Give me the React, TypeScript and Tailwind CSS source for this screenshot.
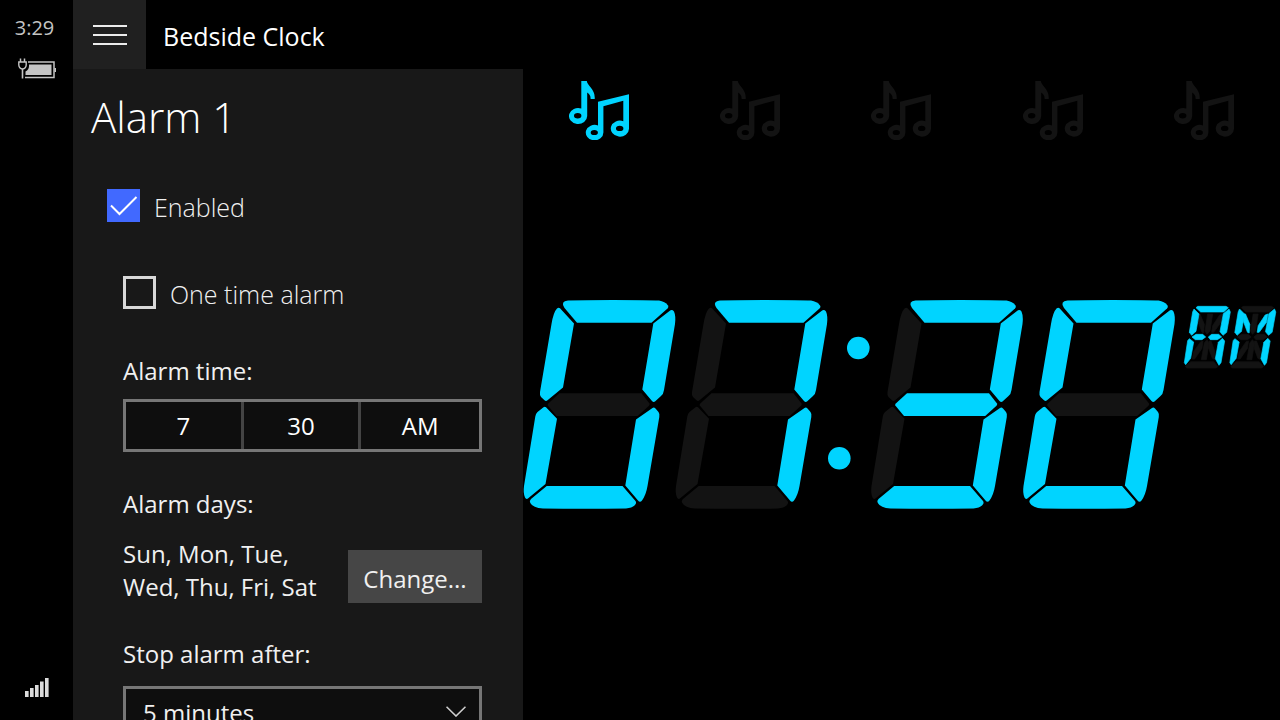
import { useState } from 'react';

type SegmentName = 'a' | 'b' | 'c' | 'd' | 'e' | 'f' | 'g';

const LIT = '#00d4ff';
const DIM = '#131313';

const segmentPaths: Record<SegmentName, string> = {
    a: 'M54 22.7 L41.5 8 Q37 1.5 45 .6 Q60 0 90 0 Q125 0 136 .6 Q142 1.5 145 5.5 Q146 7 144.5 8.5 L128.5 22.7 Z',
    b: 'M130.3 23.5 L146.5 11 Q149 9 151 11.5 Q153 16 152 24 L141 90 Q140.5 94 138 96 L132 101.5 Q130.5 102.5 129 101 L119.3 89.5 Z',
    c: 'M113 119.5 L129.5 108 Q131 107 132.5 108.5 L135.5 112 Q137 114 136.3 117 L124.5 186 Q123 195 119 200.5 Q117 203 115 200.5 L102.3 185.5 Z',
    d: 'M23.7 186 L99.5 186 L112.5 201 Q114 203 111.5 205.5 Q109 208 103 208.4 Q60 209.3 20 208.4 Q10 208 7.3 203 Q6 201 8 199 Z',
    e: 'M34 118.7 L23 107.3 Q21.8 106.2 20.5 107.3 L14.5 112 Q12.7 113.5 12.3 116.5 L1 186 Q0 193 2 197.5 Q3.2 200 5.5 198 L22.5 184 Z',
    f: 'M51 23.5 L37 8.3 Q35.8 7 34 8.5 Q30.5 12 28.5 24 L17 92 Q16.5 95 18 97 L21.5 100.3 Q23 101.6 24.5 100.3 L40 87.5 Z',
    g: 'M24.8 105.5 Q24.3 104.5 25.3 103.5 L36.5 93.3 L118.5 93.3 L126.3 103.2 Q127.2 104.5 126 105.7 L114.7 116 L33.5 116 Z',
};

const digitSegments: Record<string, string> = {
    '0': 'abcdef',
    '3': 'abcdg',
    '7': 'abc',
};

const letterPaths: Record<string, string> = {
    top: 'M78 38 L83 34 L168 34 L175 38 L161 51 L92 51 Z',
    bottom: 'M62 200 L131 200 L144 215 L138 219 L50 219 L46 214 Z',
    postUpper: 'M113 57 L128 57 L120 108 L111 118 L105 108 Z',
    postLower: 'M111 134 L117 144 L109 194 L94 194 L103 144 Z',
    diagLowerLeft: 'M99 138 L96 160 L74 192 L67 192 L71 170 L92 140 Z',
    diagLowerRight: 'M117 138 L123 138 L135 170 L133 193 L127 190 L116 160 Z',
    diagUpperLeft: 'M84 57 L90 57 L103 88 L101 114 L96 112 L84 80 Z',
    diagUpperRight: 'M157 57 L153 82 L131 112 L125 112 L128 92 L149 60 Z',
    upperLeft: 'M72 42 L87 57 L78 109 L65 121 L58 112 L68 51 Z',
    upperRight: 'M177 42 L181 51 L170 112 L159 121 L150 110 L160 56 Z',
    midLeft: 'M66 126 L78 118 L98 118 L107 126 L96 134 L76 134 Z',
    midRight: 'M115 126 L125 118 L146 118 L155 126 L142 134 L121 134 Z',
    lowerLeft: 'M58 131 L71 141 L62 190 L47 209 L43 203 L53 137 Z',
    lowerRight: 'M157 130 L164 138 L153 203 L147 211 L136 191 L145 142 Z',
};

const letterSegments: Record<string, string[]> = {
    A: ['top', 'upperLeft', 'upperRight', 'midLeft', 'midRight', 'lowerLeft', 'lowerRight'],
    M: ['upperLeft', 'upperRight', 'lowerLeft', 'lowerRight', 'diagUpperLeft', 'diagUpperRight'],
};

function Digit({ value, x }: { value: string; x: number }) {
    return (
        <g transform={`translate(${x} 0)`}>
            {(Object.keys(segmentPaths) as SegmentName[]).map((name) => (
                <path
                    key={name}
                    d={segmentPaths[name]}
                    fill={digitSegments[value].includes(name) ? LIT : DIM}
                />
            ))}
        </g>
    );
}

function Letter({ value, x }: { value: string; x: number }) {
    return (
        <g transform={`translate(${x} -5) scale(0.3333)`} strokeWidth="2" strokeLinejoin="round">
            {Object.keys(letterPaths).map((name) => {
                const color = letterSegments[value].includes(name) ? LIT : DIM;
                return <path key={name} d={letterPaths[name]} fill={color} stroke={color} />;
            })}
        </g>
    );
}

function ClockFace() {
    return (
        <svg viewBox="0 0 757 210" className="mt-40 w-full" role="img" aria-label="07:30 AM">
            <Digit value="0" x={0} />
            <Digit value="7" x={152} />
            <circle cx="335.3" cy="48" r="11.3" fill={LIT} />
            <circle cx="316.3" cy="158.3" r="11.3" fill={LIT} />
            <Digit value="3" x={347.5} />
            <Digit value="0" x={499.5} />
            <Letter value="A" x={647} />
            <Letter value="M" x={692.5} />
        </svg>
    );
}

function MusicNotes({ active }: { active: boolean }) {
    return (
        <svg viewBox="0 0 60 60" className="size-15" fill={active ? LIT : DIM} fillRule="evenodd">
            <path d="M12.3 1 H17.8 C18.3 6 26.5 9 25.7 19 H21.6 C21.8 15.5 20 13.5 18.2 12.5 V36 A9.1 8 0 1 1 12.3 28.5 Z M5 35.7 A3.7 2.7 0 1 0 12.4 35.7 A3.7 2.7 0 1 0 5 35.7 Z" />
            <path d="M29 21.7 L60 14.3 V48.7 A9.1 8 0 1 1 54.3 41.2 V20.7 L34.4 26.2 V52.5 A8.8 7.7 0 1 1 29 45.5 Z M21.7 52.5 A3.6 2.6 0 1 0 28.9 52.5 A3.6 2.6 0 1 0 21.7 52.5 Z M47 48.4 A3.7 2.7 0 1 0 54.4 48.4 A3.7 2.7 0 1 0 47 48.4 Z" />
        </svg>
    );
}

function BatteryIcon() {
    return (
        <svg viewBox="0 0 38 21" className="mt-4 h-[21px] w-[38px]" fill="none" stroke="#c4c4c4">
            <path d="M2.5 0.5 V4 M6.5 0.5 V4" strokeWidth="1.5" />
            <path d="M0.8 4 H8.2 V7 Q8 10.5 4.5 11 Q1 10.5 0.8 7 Z" strokeWidth="1.4" />
            <path d="M4.5 11 V20.5" strokeWidth="1.6" />
            <path d="M10 4 H36 V19.5 H7" strokeWidth="1.5" />
            <path d="M11 6.5 H33.5 V17 H7.5 V13.5 Q11 11.5 11 8 Z" fill="#c4c4c4" stroke="none" />
            <path d="M37.2 10 V14" strokeWidth="1.6" />
        </svg>
    );
}

function SignalIcon() {
    return (
        <svg viewBox="0 0 24 19" className="h-[19px] w-6" fill="#dcdcdc">
            <rect x="0" y="13" width="3.6" height="6" />
            <rect x="5" y="10" width="3.6" height="9" />
            <rect x="10" y="7" width="3.6" height="12" />
            <rect x="15" y="3.5" width="3.6" height="15.5" />
            <rect x="20" y="0" width="3.6" height="19" />
        </svg>
    );
}

interface CheckboxRowProps {
    id: string;
    label: string;
    checked: boolean;
    onChange: (checked: boolean) => void;
}

function CheckboxRow({ id, label, checked, onChange }: CheckboxRowProps) {
    return (
        <div className="flex h-[33px] items-center gap-[14px]">
            <span className="relative size-[33px]">
                <input
                    id={id}
                    type="checkbox"
                    checked={checked}
                    onChange={(e) => onChange(e.target.checked)}
                    className="block size-[33px] appearance-none border-3 border-[#d8d8d8] checked:border-[#4169ff] checked:bg-[#4169ff]"
                />
                {checked && (
                    <svg
                        viewBox="0 0 33 33"
                        className="pointer-events-none absolute inset-0"
                        fill="none"
                        stroke="white"
                        strokeWidth="2"
                    >
                        <path d="M4 16.5 L12.5 25 L29.5 8" />
                    </svg>
                )}
            </span>
            <label htmlFor={id} className="pt-1 text-[25px] font-light">{label}</label>
        </div>
    );
}

const timeParts = [
    { name: 'Hour', value: '7' },
    { name: 'Minute', value: '30' },
    { name: 'Period', value: 'AM' },
];

function AlarmPanel() {
    const [enabled, setEnabled] = useState(true);
    const [oneTime, setOneTime] = useState(false);

    return (
        <section className="w-[450px] shrink-0 overflow-hidden bg-[#181818] pt-[18px] pr-[41px] pl-[18px] text-[24px] leading-[33px] text-[#f0f0f0]">
            <h2 className="text-[42px] leading-[60px] font-light text-white">Alarm 1</h2>
            <div className="mt-[42px] pl-4">
                <CheckboxRow id="enabled" label="Enabled" checked={enabled} onChange={setEnabled} />
            </div>
            <div className="mt-[54px] pl-8">
                <CheckboxRow id="one-time" label="One time alarm" checked={oneTime} onChange={setOneTime} />

                <h3 id="alarm-time" className="mt-[45px]">Alarm time:</h3>
                <div
                    role="group"
                    aria-labelledby="alarm-time"
                    className="mt-3 grid h-[53px] grid-cols-3 divide-x-3 divide-[#444444] border-3 border-[#767676] bg-[#0e0e0e] text-white"
                >
                    {timeParts.map((part) => (
                        <button key={part.name} type="button" aria-label={`${part.name} ${part.value}`}>
                            {part.value}
                        </button>
                    ))}
                </div>

                <h3 className="mt-[35px]">Alarm days:</h3>
                <div className="mt-[17px] flex items-end justify-between">
                    <p>
                        Sun, Mon, Tue,
                        <br />
                        Wed, Thu, Fri, Sat
                    </p>
                    <button type="button" className="h-[53px] w-[134px] bg-[#464646] pt-1">
                        Change...
                    </button>
                </div>

                <label htmlFor="stop-after" className="mt-[34px] block">Stop alarm after:</label>
                <div className="relative mt-4">
                    <select
                        id="stop-after"
                        defaultValue="5"
                        className="block h-[53px] w-full appearance-none border-3 border-[#767676] bg-[#0e0e0e] px-[17px]"
                    >
                        <option value="5">5 minutes</option>
                        <option value="10">10 minutes</option>
                        <option value="15">15 minutes</option>
                    </select>
                    <svg
                        viewBox="0 0 20 11"
                        className="pointer-events-none absolute top-5 right-4 h-[11px] w-5"
                        fill="none"
                        stroke="#d0d0d0"
                        strokeWidth="1.6"
                    >
                        <path d="M0.5 0.7 L10 10 L19.5 0.7" />
                    </svg>
                </div>
            </div>
        </section>
    );
}

export default function App() {
    return (
        <div className="flex h-screen overflow-hidden bg-black font-['Open_Sans','Noto_Sans',sans-serif] text-white">
            <aside className="flex w-[73px] shrink-0 flex-col items-center justify-between pt-[14px] pb-[23px]">
                <div className="flex flex-col items-center">
                    <span className="pr-1 text-[20px] leading-7 text-[#c4c4c4]">3:29</span>
                    <BatteryIcon />
                </div>
                <SignalIcon />
            </aside>

            <div className="flex min-w-0 flex-1 flex-col">
                <header className="flex h-[69px] shrink-0 items-center">
                    <button
                        type="button"
                        aria-label="Menu"
                        className="flex h-full w-[73px] items-center justify-center bg-[#202020]"
                    >
                        <svg viewBox="0 0 34 20" className="h-5 w-[34px]" fill="#ececec">
                            <rect width="34" height="2" />
                            <rect y="9" width="34" height="2" />
                            <rect y="18" width="34" height="2" />
                        </svg>
                    </button>
                    <h1 className="pt-1 pl-[17px] text-[25px] leading-[33px]">Bedside Clock</h1>
                </header>

                <div className="flex min-h-0 flex-1">
                    <AlarmPanel />
                    <main className="min-w-0 flex-1 pt-[11px]">
                        <div className="grid grid-cols-5 justify-items-center">
                            {[0, 1, 2, 3, 4].map((i) => (
                                <MusicNotes key={i} active={i === 0} />
                            ))}
                        </div>
                        <ClockFace />
                    </main>
                </div>
            </div>
        </div>
    );
}
